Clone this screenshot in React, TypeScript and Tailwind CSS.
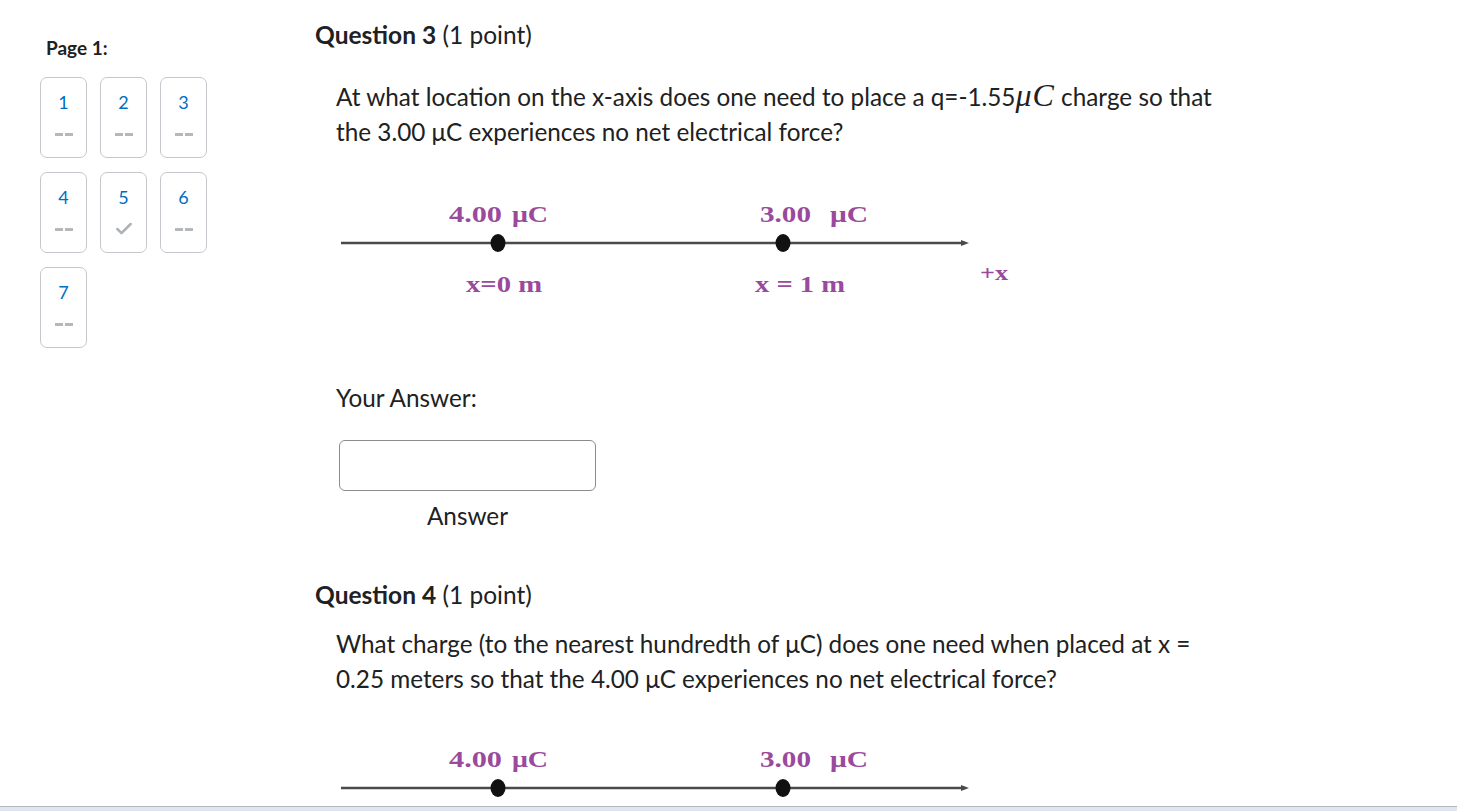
import { Check } from "lucide-react";

const tiles = [
  { n: "1", done: false },
  { n: "2", done: false },
  { n: "3", done: false },
  { n: "4", done: false },
  { n: "5", done: true },
  { n: "6", done: false },
  { n: "7", done: false },
];

const ChargeDiagram = ({ positions = true }: { positions?: boolean }) => {
  return (
    <svg width="690" height="105" viewBox="0 0 690 105" className="block">
      <g fontFamily="'Liberation Serif', 'Times New Roman', serif" fontWeight="700" fill="#9a4a9d">
        <text x="113" y="26" fontSize="24" textLength="53" lengthAdjust="spacingAndGlyphs">4.00</text>
        <text x="176" y="26" fontSize="24" textLength="36" lengthAdjust="spacingAndGlyphs">μC</text>
        <text x="424" y="26" fontSize="24" textLength="51" lengthAdjust="spacingAndGlyphs">3.00</text>
        <text x="494" y="26" fontSize="24" textLength="38" lengthAdjust="spacingAndGlyphs">μC</text>
        {positions && (
          <>
            <text x="130" y="96" fontSize="24" textLength="76" lengthAdjust="spacingAndGlyphs">x=0 m</text>
            <text x="419" y="96" fontSize="24" textLength="90" lengthAdjust="spacingAndGlyphs">x = 1 m</text>
            <text x="644" y="84" fontSize="22" textLength="28" lengthAdjust="spacingAndGlyphs">+x</text>
          </>
        )}
      </g>
      <line x1="5" y1="47" x2="628" y2="47" stroke="#4a4a4a" strokeWidth="2.5" />
      <path d="M625 44 L633 47 L625 50 Z" fill="#4a4a4a" />
      <ellipse cx="162" cy="47" rx="7.5" ry="9" fill="#111" />
      <ellipse cx="447" cy="47" rx="7.5" ry="9" fill="#111" />
    </svg>
  );
};

const Tile = ({ n, done }: { n: string; done: boolean }) => (
  <div className="w-[47px] h-[81px] rounded-[7px] border border-[#c4c8cc] flex flex-col items-center pt-[12px] bg-white">
    <span className="text-[18px] leading-[24px] text-[#006fbf]">{n}</span>
    <div className="mt-[10px] h-[20px] flex items-center justify-center">
      {done ? (
        <Check size={20} strokeWidth={3} className="text-[#aeb2b6]" />
      ) : (
        <div className="flex gap-[2px]">
          <span className="block w-[8px] h-[3px] bg-[#b5b8bb]" />
          <span className="block w-[8px] h-[3px] bg-[#b5b8bb]" />
        </div>
      )}
    </div>
  </div>
);

export default function App() {
  return (
    <div
      className="w-full h-[811px] overflow-hidden bg-white flex flex-col text-[#202122]"
      style={{ fontFamily: "Lato, 'Open Sans', sans-serif" }}
    >
      <div className="flex-1 flex overflow-hidden">
        {/* quiz navigation */}
        <aside className="w-[315px] shrink-0 pl-[40px] pt-[35px]">
          <p className="ml-[6px] text-[19px] leading-[26px] font-bold">Page 1:</p>
          <div className="mt-[16px] grid grid-cols-[47px_47px_47px] gap-x-[13px] gap-y-[14px]">
            {tiles.map((t) => (
              <Tile key={t.n} n={t.n} done={t.done} />
            ))}
          </div>
        </aside>

        {/* questions */}
        <main className="flex-1 pt-[21px]">
          <h2 className="text-[24.5px] leading-[28px]">
            <span className="font-bold">Question 3</span> (1 point)
          </h2>
          <div className="pl-[21px]">
            <p className="mt-[30px] text-[24.3px] leading-[35px] whitespace-nowrap">
              At what location on the x-axis does one need to place a q=-1.55
              <span
                className="italic text-[32px] leading-[20px] tracking-[1px]"
                style={{ fontFamily: "'Liberation Serif', serif" }}
              >
                μC
              </span>{" "}
              charge so that
              <br />
              the 3.00 μC experiences no net electrical force?
            </p>
            <div className="mt-[47px]">
              <ChargeDiagram />
            </div>
            <p className="mt-[79px] text-[24.3px] leading-[35px]">Your Answer:</p>
            <div className="mt-[25px] ml-[3px] w-[257px]">
              <div className="h-[51px] rounded-[6px] border border-[#8c8c8c] bg-white" />
              <p className="mt-[13px] text-center text-[24.3px] leading-[24px]">Answer</p>
            </div>
          </div>

          <h2 className="mt-[53px] text-[24.5px] leading-[28px]">
            <span className="font-bold">Question 4</span> (1 point)
          </h2>
          <div className="pl-[21px]">
            <p className="mt-[17px] text-[24.3px] leading-[35px] whitespace-nowrap">
              What charge (to the nearest hundredth of μC) does one need when placed at x =
              <br />
              0.25 meters so that the 4.00 μC experiences no net electrical force?
            </p>
            <div className="mt-[45px]">
              <ChargeDiagram positions={false} />
            </div>
          </div>
        </main>
      </div>
      <div className="h-[5px] shrink-0 border-t border-[#b4b7c0] bg-[#dfe6f1]" />
    </div>
  );
}
